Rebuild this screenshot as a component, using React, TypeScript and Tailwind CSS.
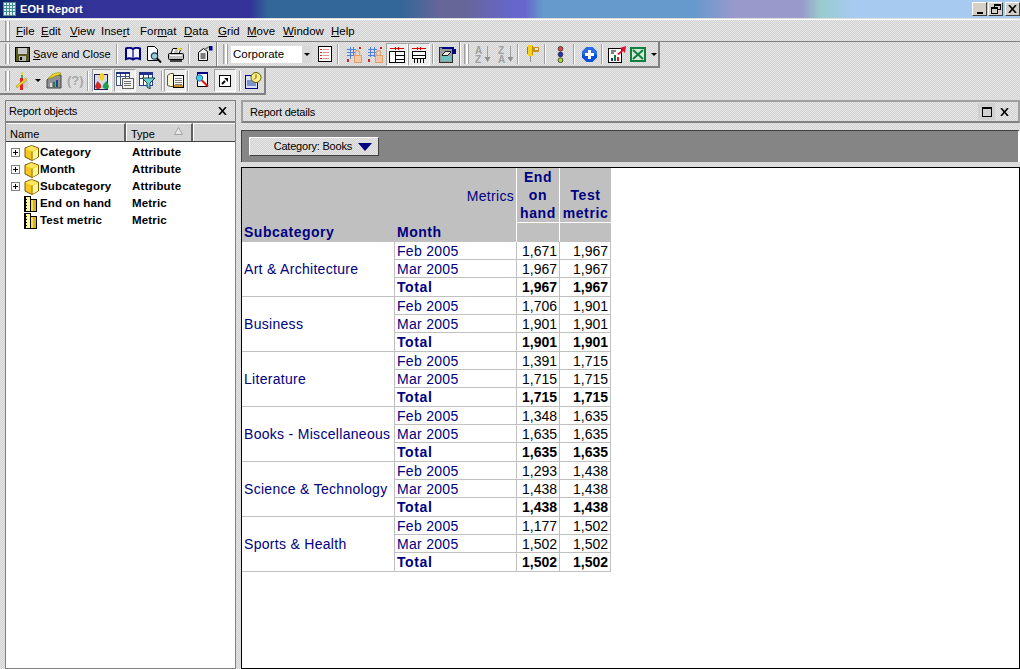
import React from 'react';

const dither =
	'bg-[repeating-conic-gradient(#d2d2d2_0_25%,#e6e6e6_0_50%)] bg-[length:2px_2px]';

type SvgProps = { className?: string };

const Px = ({ children, w = 16, h = 16, className = '' }: { children: React.ReactNode; w?: number; h?: number; className?: string }) => (
	<svg width={w} height={h} viewBox={`0 0 ${w} ${h}`} shapeRendering="crispEdges" className={`shrink-0 ${className}`}>
		{children}
	</svg>
);

const GridLogo = () => (
	<Px w={13} h={14}>
		<rect x="0.5" y="0.5" width="12" height="13" fill="#dfeef0" stroke="#6f7f90" />
		<path d="M0 3.5h13M0 6.5h13M0 9.5h13M3.5 0v14M6.5 0v14M9.5 0v14" stroke="#3f8f95" fill="none" />
	</Px>
);

const SaveIcon = ({ className }: SvgProps) => (
	<Px w={15} h={15} className={className}>
		<rect x="0.5" y="0.5" width="14" height="14" fill="#5a5a1e" stroke="#000" />
		<rect x="3" y="1" width="9" height="6" fill="#c8c8c8" />
		<rect x="4" y="9" width="7" height="5" fill="#b8b8b8" />
		<rect x="5" y="10" width="2" height="3" fill="#000" />
	</Px>
);

const BookIcon = ({ className }: SvgProps) => (
	<svg width="16" height="14" viewBox="0 0 16 14" className={`shrink-0 ${className ?? ''}`}>
		<path d="M1 1.5c2.500-1 5-1 7 .5 2-1.500 4.500-1.500 7-.5v10.500c-2.500-1-5-1-7 .5-2-1.500-4.500-1.500-7-.5z" fill="#f0f0fa" stroke="#000080" strokeWidth="2" />
		<path d="M8 2v11" stroke="#000080" strokeWidth="1.2" />
	</svg>
);

const PreviewIcon = ({ className }: SvgProps) => (
	<svg width="16" height="17" viewBox="0 0 16 17" className={`shrink-0 ${className ?? ''}`}>
		<path d="M1.5 .5h7l3 3v11h-10z" fill="#fff" stroke="#000" />
		<circle cx="8.5" cy="10" r="3.2" fill="#9ccbd0" stroke="#1c3a5a" strokeWidth="1.2" />
		<path d="M11 12.5l4 4" stroke="#000" strokeWidth="2" />
	</svg>
);

const PrintIcon = ({ className }: SvgProps) => (
	<svg width="16" height="15" viewBox="0 0 16 15" className={`shrink-0 ${className ?? ''}`}>
		<path d="M5 1.500h8l-2 5H3z" fill="#fff" stroke="#000" />
		<path d="M7 3h3M6 5h4" stroke="#808080" />
		<rect x="0.500" y="6.500" width="15" height="6" rx="1" fill="#c0c0c0" stroke="#000" />
		<rect x="2" y="8" width="12" height="1" fill="#ffffff" />
		<rect x="9" y="1" width="4" height="2" fill="#e8d840" />
		<rect x="2" y="13" width="12" height="2" fill="#404040" />
	</svg>
);

const PropsIcon = ({ className }: SvgProps) => (
	<svg width="17" height="16" viewBox="0 0 17 16" className={`shrink-0 ${className ?? ''}`}>
		<path d="M2.5 6.5L7.5 2.5l4 3v9h-9z" fill="#f2f2f2" stroke="#000" />
		<path d="M4.5 8h5M4.5 10h5M4.5 12h5" stroke="#000" />
		<path d="M9 3l4-2" stroke="#808080" strokeWidth="1.5" />
		<rect x="13" y="0" width="3.5" height="4.5" fill="#000080" />
	</svg>
);

const ListIcon = ({ className }: SvgProps) => (
	<Px w={14} h={16} className={className}>
		<rect x="0.5" y="0.5" width="13" height="15" fill="#fff" stroke="#000" />
		<path d="M5 3.5h6M5 6.5h6M5 9.5h6M5 12.5h6" stroke="#e89090" />
		<path d="M2 3.5h2M2 6.5h2M2 9.5h2M2 12.5h2" stroke="#e02020" />
	</Px>
);

const LockIcon = ({ flip, className }: SvgProps & { flip?: boolean }) => (
	<Px w={16} h={17} className={className}>
		<path d="M1 3.500h9M1 6.500h9M1 9.500h7" stroke="#5080d8" />
		<path d={flip ? 'M3.500 1v10M7.500 1v10' : 'M4.500 1v12M7.500 1v8'} stroke="#5080d8" />
		<rect x="1" y="13" width="2" height="3" fill="#d02020" />
		<rect x="8" y="9" width="7" height="7" fill="#f4c8a0" stroke="#e0a070" />
		<path d="M9.500 9V6.500a2 2 0 0 1 4 0V9" fill="none" stroke="#e0a878" strokeWidth="1.4" shapeRendering="auto" />
		<rect x="13" y="1" width="2" height="2" fill="#d02020" />
	</Px>
);

const LayoutA = () => (
	<Px w={16} h={17}>
		<path d="M1 2.5h6M9 2.5h6" stroke="#e00000" />
		<path d="M6 1l2 1.5-2 1.5zM10 1l-2 1.5 2 1.5z" fill="#e00000" />
		<rect x="0.5" y="5.5" width="15" height="11" fill="#fff" stroke="#000" />
		<path d="M6.5 5v12M6.5 9h9M6.5 13h9" stroke="#000" />
	</Px>
);

const LayoutB = () => (
	<Px w={16} h={17}>
		<path d="M1 2.5h6M9 2.5h6" stroke="#e00000" />
		<path d="M6 1l2 1.5-2 1.5zM10 1l-2 1.5 2 1.5z" fill="#e00000" />
		<rect x="1.5" y="5.5" width="13" height="7" fill="#fff" stroke="#000" />
		<path d="M2 9h12M3.5 12v5M6.5 12v5M9.5 12v5M12.5 12v5" stroke="#000" />
	</Px>
);

const HandIcon = ({ className }: SvgProps) => (
	<Px w={17} h={17} className={className}>
		<rect x="0.5" y="1.5" width="13" height="15" fill="#9a9a9a" stroke="#303030" />
		<rect x="2" y="10" width="10" height="5" fill="#70c0c0" />
		<path d="M3 1h12v2H3z" fill="#000080" />
		<rect x="13" y="3" width="4" height="5" fill="#000080" />
		<path d="M3 9l4-4 5 1-3 3-2 1z" fill="#e8e8e8" stroke="#202020" />
	</Px>
);

const SortIcon = ({ top, bottom, className }: SvgProps & { top: string; bottom: string }) => (
	<svg width="17" height="18" viewBox="0 0 17 18" className={`shrink-0 ${className ?? ''}`}>
		<text x="1" y="8.500" fontFamily="Liberation Sans" fontWeight="700" fontSize="10" fill="#a0a0a0">{top}</text>
		<text x="1" y="17.500" fontFamily="Liberation Sans" fontWeight="700" fontSize="10" fill="#a0a0a0">{bottom}</text>
		<path d="M13.500 1v11" stroke="#a0a0a0" />
		<path d="M10.500 12h6l-3 5z" fill="#909090" />
	</svg>
);

const PinIcon = ({ className }: SvgProps) => (
	<Px w={13} h={18} className={className}>
		<rect x="2" y="0" width="5" height="11" fill="#f8d020" />
		<rect x="1" y="2" width="1" height="7" fill="#a08000" />
		<rect x="6" y="1" width="1" height="9" fill="#b89000" />
		<rect x="7" y="2" width="6" height="5" fill="#c89020" />
		<rect x="9" y="3" width="3" height="2" fill="#e8e8e8" />
		<rect x="4" y="11" width="1" height="6" fill="#909090" />
	</Px>
);

const LightsIcon = ({ className }: SvgProps) => (
	<svg width="7" height="17" viewBox="0 0 7 17" className={`shrink-0 ${className ?? ''}`}>
		<circle cx="3.5" cy="2.8" r="2.4" fill="#e04048" stroke="#303030" strokeWidth=".8" />
		<circle cx="3.5" cy="8.5" r="2.4" fill="#2030c0" stroke="#303030" strokeWidth=".8" />
		<circle cx="3.5" cy="14.2" r="2.4" fill="#a8e030" stroke="#303030" strokeWidth=".8" />
	</svg>
);

const PlusCircle = ({ className }: SvgProps) => (
	<svg width="15" height="15" viewBox="0 0 15 15" className={`shrink-0 ${className ?? ''}`}>
		<path d="M4.5 0h6L15 4.5v6L10.5 15h-6L0 10.5v-6z" fill="#0a50d8" />
		<path d="M4.5 0h6L15 4.5v3H0v-3z" fill="#3a80f0" opacity=".6" />
		<path d="M6 3h3v3h3v3H9v3H6V9H3V6h3z" fill="#fff" />
	</svg>
);

const ChartArrow = ({ className }: SvgProps) => (
	<svg width="18" height="17" viewBox="0 0 18 17" className={`shrink-0 ${className ?? ''}`}>
		<rect x="0.5" y="2.5" width="13" height="14" fill="#fff" stroke="#000" />
		<path d="M3 5h5M3 7h3" stroke="#000" />
		<rect x="3" y="12" width="2" height="3" fill="#1030c0" />
		<rect x="6" y="9" width="2" height="6" fill="#108030" />
		<rect x="9" y="11" width="2" height="4" fill="#d02020" />
		<path d="M9 8l5-4-2-2 6-2-1 7-2-2-4 4z" fill="#e01030" />
	</svg>
);

const ExcelIcon = ({ className }: SvgProps) => (
	<Px w={16} h={15} className={className}>
		<rect x="0" y="0" width="16" height="15" fill="#108040" />
		<rect x="2" y="2" width="12" height="11" fill="#d8e8d8" />
		<path d="M3 3l10 9M13 3L3 12" stroke="#108040" strokeWidth="2" shapeRendering="auto" />
	</Px>
);

const PencilIcon = ({ className }: SvgProps) => (
	<svg width="15" height="20" viewBox="0 0 15 20" className={`shrink-0 ${className ?? ''}`}>
		<path d="M8 10h5v7H6z" fill="#c8c8c8" opacity=".7" />
		<path d="M7 1v4" stroke="#e8d020" strokeWidth="1.5" />
		<path d="M7 4v5" stroke="#20a020" strokeWidth="1.5" />
		<path d="M5 7h3v12H5z" fill="#e02020" />
		<path d="M1 15l10-8 1 2-10 8z" fill="#f0d040" stroke="#909000" strokeWidth=".5" />
	</svg>
);

const WizardIcon = ({ className }: SvgProps) => (
	<svg width="16" height="17" viewBox="0 0 16 17" className={`shrink-0 ${className ?? ''}`}>
		<path d="M1 16V8l5-5h9v13z" fill="#909090" stroke="#404040" />
		<path d="M2 7c3-5 8-7 13-6-2 3-4 2-6 3-2 1-4 2-7 3z" fill="#f0e020" stroke="#908000" strokeWidth=".6" />
		<rect x="7" y="10" width="2" height="5" fill="#208040" />
		<rect x="10" y="8" width="2" height="7" fill="#2040a0" />
		<rect x="4" y="11" width="2" height="4" fill="#d8d8d8" />
	</svg>
);

const ObjectsIcon = () => (
	<svg width="16" height="18" viewBox="0 0 16 18" className="shrink-0">
		<rect x="0.5" y="2.5" width="13" height="15" fill="#d8d8e8" stroke="#202050" />
		<path d="M8 9c3-1 3-8 0-8s-4 7 0 8z" fill="#f8d020" />
		<path d="M4.500 17c-3 0-4-2-3-4l2-4 3 3 1 3c-1 1-2 2-3 2z" fill="#d02828" />
		<path d="M11.500 17c3 0 4-2 3-4l-2-4-3 3-1 3c1 1 2 2 3 2z" fill="#18a050" />
	</svg>
);

const GridsIcon = () => (
	<Px w={18} h={17}>
		<rect x="0.5" y="0.5" width="13" height="13" fill="#fff" stroke="#405080" />
		<path d="M0 4.5h14M4.5 0v14M9.5 0v14" stroke="#405080" />
		<rect x="0" y="0" width="14" height="2" fill="#203080" />
		<rect x="6.5" y="6.5" width="11" height="10" fill="#f4f4f4" stroke="#606060" />
		<path d="M8 9h7M8 11h7M8 13h7" stroke="#707070" />
	</Px>
);

const FilterIcon = ({ className }: SvgProps) => (
	<Px w={17} h={17} className={className}>
		<rect x="0.5" y="0.5" width="13" height="13" fill="#fff" stroke="#2040a0" />
		<rect x="0" y="0" width="14" height="3" fill="#203090" />
		<path d="M0 6.5h14M4.5 3v10M9.5 3v10" stroke="#2040a0" />
		<path d="M3 6h13l-5 5v6l-3-2v-4z" fill="#70d0d0" stroke="#204040" shapeRendering="auto" />
	</Px>
);

const PagesIcon = () => (
	<Px w={17} h={15}>
		<path d="M.5 2.5l3-2h3v13h-3l-3-1z" fill="#fff8d0" stroke="#605030" shapeRendering="auto" />
		<rect x="6.5" y="2.5" width="10" height="12" fill="#fff" stroke="#000" />
		<path d="M8 5h7M8 7h7M8 9h7M8 11h7" stroke="#808080" />
		<rect x="7" y="12" width="9" height="2" fill="#c89020" />
	</Px>
);

const SearchPageIcon = ({ className }: SvgProps) => (
	<svg width="16" height="17" viewBox="0 0 16 17" className={`shrink-0 ${className ?? ''}`}>
		<rect x="2.5" y="0.5" width="10" height="14" fill="#fff" stroke="#000" />
		<rect x="2" y="0" width="11" height="2" fill="#000080" />
		<circle cx="4.5" cy="6" r="3.2" fill="#40d0e0" stroke="#3060a0" />
		<path d="M7 8.5l6 6" stroke="#e01010" strokeWidth="2" />
	</svg>
);

const ShortcutIcon = () => (
	<Px w={12} h={12}>
		<rect x="0.5" y="0.5" width="11" height="11" fill="#fff" stroke="#000" />
		<path d="M3 9l3-3" stroke="#000" strokeWidth="2" shapeRendering="auto" />
		<path d="M5 3h4v4z" fill="#000" shapeRendering="auto" />
	</Px>
);

const ClockIcon = ({ className }: SvgProps) => (
	<svg width="17" height="17" viewBox="0 0 17 17" className={`shrink-0 ${className ?? ''}`}>
		<rect x="0.5" y="3.5" width="12" height="13" fill="#d8e0f8" stroke="#000080" />
		<path d="M2 9h9M2 11h9M2 13h9" stroke="#2040a0" />
		<circle cx="11" cy="5.5" r="5" fill="#f8f080" stroke="#606000" />
		<path d="M11 2.5v3l-2 2" stroke="#804000" fill="none" />
	</svg>
);

const Cube = () => (
	<svg width="16" height="16" viewBox="0 0 16 16" className="shrink-0">
		<path d="M7.500.500l7 2.500v9l-6.500 3.500-7-3.500V3z" fill="#f4c820" stroke="#7a5a00" strokeLinejoin="round" />
		<path d="M1.500 3.500l6.500 3 6-3-6.500-2.500z" fill="#ffe860" />
		<path d="M8.500 7l5.500-3v8l-5.500 3z" fill="#fff59a" />
		<path d="M8 6.500v8.500" stroke="#9a7400" />
	</svg>
);

const MetricIcon = () => (
	<Px w={13} h={16}>
		<rect x="0" y="0" width="7" height="16" fill="#000" />
		<rect x="2" y="1" width="4" height="14" fill="#fff8a0" />
		<path d="M0 3.500h3M0 6.500h3M0 9.500h3M0 12.500h3" stroke="#000" />
		<rect x="7" y="3" width="6" height="13" fill="#000" />
		<rect x="7" y="4" width="2" height="11" fill="#f8e050" />
		<rect x="9" y="4" width="3" height="11" fill="#d8b030" />
	</Px>
);

const Grip = ({ className = '' }: SvgProps) => (
	<div className={`flex h-[20px] w-[5px] shrink-0 gap-px border-x border-[#a0a0a0] bg-white ${className}`}>
		<div className="w-px bg-[#c8c8c8]" />
	</div>
);

const Sep = ({ className = '' }: SvgProps) => (
	<div className={`h-[20px] w-[2px] shrink-0 border-r border-white bg-[#a0a0a0] ${className}`} />
);

const Edge = ({ className = '' }: SvgProps) => (
	<div className={`h-full w-[2px] shrink-0 border-r border-white bg-[#808080] ${className}`} />
);

const Pressed = ({ children, className = '', w }: { children: React.ReactNode; className?: string; w: string }) => (
	<div className={`flex h-[23px] shrink-0 items-center justify-center border border-t-[#a0a0a0] border-l-[#a0a0a0] border-r-white border-b-white bg-[#eeeeee] ${w} ${className}`}>
		{children}
	</div>
);

const Arrow = ({ className = '' }: SvgProps) => (
	<div className={`h-0 w-0 shrink-0 border-x-[3px] border-t-[3px] border-x-transparent border-t-black ${className}`} />
);

const WinButton = ({ children, className = '' }: { children: React.ReactNode; className?: string }) => (
	<div className={`flex h-[14px] w-[15px] items-center justify-center border border-t-white border-l-white border-r-[#404040] border-b-[#404040] bg-[#d4d0c8] ${className}`}>
		{children}
	</div>
);

const Close = ({ className = '' }: SvgProps) => (
	<svg width="9" height="8" viewBox="0 0 9 8" className={className}>
		<path d="M1 0l7 8M8 0L1 8" stroke="#000" strokeWidth="1.6" />
	</svg>
);

const menu = [
	{ pre: '', u: 'F', post: 'ile', w: 'w-[25px]' },
	{ pre: '', u: 'E', post: 'dit', w: 'w-[29px]' },
	{ pre: '', u: 'V', post: 'iew', w: 'w-[31px]' },
	{ pre: 'Inse', u: 'r', post: 't', w: 'w-[39px]' },
	{ pre: 'For', u: 'm', post: 'at', w: 'w-[44px]' },
	{ pre: '', u: 'D', post: 'ata', w: 'w-[34px]' },
	{ pre: '', u: 'G', post: 'rid', w: 'w-[29px]' },
	{ pre: '', u: 'M', post: 'ove', w: 'w-[36px]' },
	{ pre: '', u: 'W', post: 'indow', w: 'w-[48px]' },
	{ pre: '', u: 'H', post: 'elp', w: 'w-[30px]' },
];

const objects = [
	{ name: 'Category', type: 'Attribute', expand: true },
	{ name: 'Month', type: 'Attribute', expand: true },
	{ name: 'Subcategory', type: 'Attribute', expand: true },
	{ name: 'End on hand', type: 'Metric', expand: false },
	{ name: 'Test metric', type: 'Metric', expand: false },
];

const groups = [
	{ name: 'Art & Architecture', rows: ['1,671', '1,967', '1,967'], test: '1,967' },
	{ name: 'Business', rows: ['1,706', '1,901', '1,901'], test: '1,901' },
	{ name: 'Literature', rows: ['1,391', '1,715', '1,715'], test: '1,715' },
	{ name: 'Books - Miscellaneous', rows: ['1,348', '1,635', '1,635'], test: '1,635' },
	{ name: 'Science & Technology', rows: ['1,293', '1,438', '1,438'], test: '1,438' },
	{ name: 'Sports & Health', rows: ['1,177', '1,502', '1,502'], test: '1,502' },
];

const cell = 'border-r border-b border-[#c0c0c0] p-0 align-middle';

export default function App() {
	return (
		<div className={`flex h-[669px] w-[1020px] flex-col overflow-hidden font-['Liberation_Sans',sans-serif] text-[11px] text-black ${dither}`}>
			{/* title bar */}
			<div className="flex h-[18px] shrink-0 items-center bg-[linear-gradient(90deg,#0a246a_0,#333399_90px,#333399_250px,#336699_268px,#336699_400px,#666699_440px,#666699_463px,#6666cc_513px,#6666cc_525px,#6699cc_543px,#6699cc_693px,#9999cc_735px,#9999cc_802px,#99cccc_820px,#a6caf0_853px)] pl-[3px]">
				<GridLogo />
				<span className="ml-[4px] text-[11px] font-bold tracking-[0.05px] text-white">EOH Report</span>
				<div className="ml-auto flex items-center">
					<WinButton>
						<div className="mt-[7px] h-[2px] w-[6px] bg-black" />
					</WinButton>
					<WinButton className="ml-px">
						<svg width="10" height="10" viewBox="0 0 10 10" shapeRendering="crispEdges">
							<path d="M3 .5h6v5H7M3 .5v2M3 1.5h6" fill="none" stroke="#000" />
							<rect x="0.5" y="3.5" width="6" height="6" fill="none" stroke="#000" />
							<path d="M1 4.5h5" stroke="#000" />
						</svg>
					</WinButton>
					<WinButton className="ml-[2px]">
						<Close />
					</WinButton>
				</div>
			</div>

			{/* menu bar */}
			<div className="mt-px flex h-[23px] shrink-0 items-center border-t border-b border-t-white border-b-[#808080]">
				<Grip className="ml-[5px]" />
				<div className="mt-[2px] ml-[6px] flex">
					{menu.map((m) => (
						<span key={m.u + m.post} className={`${m.w} text-[11.5px]`}>
							{m.pre}
							<span className="underline">{m.u}</span>
							{m.post}
						</span>
					))}
				</div>
			</div>

			{/* standard toolbars */}
			<div className="flex h-[26px] w-[660px] shrink-0 items-center border-r-2 border-b-2 border-[#808080]">
				<Grip className="ml-[5px]" />
				<SaveIcon className="ml-[5px]" />
				<span className="ml-[3px] w-[74px] shrink-0 whitespace-nowrap pt-px text-[11px]">
					<span className="underline">S</span>ave and Close
				</span>
				<Sep className="ml-[9px]" />
				<BookIcon className="ml-[7px]" />
				<PreviewIcon className="ml-[5px]" />
				<PrintIcon className="ml-[6px]" />
				<Sep className="ml-[4px]" />
				<PropsIcon className="ml-[6px]" />
				<Edge className="ml-[3px]" />
				<Grip className="ml-[5px]" />
				<div className="ml-[3px] flex h-[17px] w-[81px] shrink-0 items-center justify-between bg-white pl-[2px]">
					<span className="pt-px text-[11.5px]">Corporate</span>
					<div className="flex h-full w-[10px] items-center justify-center bg-[#d8d8d8]">
						<Arrow />
					</div>
				</div>
				<ListIcon className="ml-[6px]" />
				<Sep className="ml-[5px]" />
				<LockIcon className="ml-[7px]" />
				<LockIcon flip className="ml-[5px]" />
				<Pressed w="w-[22px]" className="ml-[3px]">
					<LayoutA />
				</Pressed>
				<Pressed w="w-[22px]">
					<LayoutB />
				</Pressed>
				<Sep className="ml-[2px]" />
				<HandIcon className="ml-[5px]" />
				<Edge className="ml-[3px]" />
				<Grip className="ml-[3px]" />
				<SortIcon top="A" bottom="Z" className="ml-[5px]" />
				<SortIcon top="Z" bottom="A" className="ml-[6px]" />
				<Sep className="ml-[3px]" />
				<PinIcon className="ml-[7px]" />
				<Sep className="ml-[5px]" />
				<LightsIcon className="ml-[11px]" />
				<Sep className="ml-[9px]" />
				<PlusCircle className="ml-[7px]" />
				<Sep className="ml-[4px]" />
				<ChartArrow className="ml-[5px]" />
				<ExcelIcon className="ml-[4px]" />
				<Arrow className="ml-[5px]" />
			</div>

			{/* analysis toolbar */}
			<div className="flex h-[27px] w-[266px] shrink-0 items-center border-r-2 border-b-2 border-[#808080]">
				<Grip className="ml-[5px]" />
				<PencilIcon className="ml-[5px]" />
				<Arrow className="ml-[5px]" />
				<WizardIcon className="ml-[5px]" />
				<span className="ml-[5px] w-[17px] shrink-0 whitespace-nowrap text-[13px] font-bold text-[#a8a8a8]">(?)</span>
				<Sep className="ml-[3px]" />
				<Pressed w="w-[20px]" className="ml-[3px]">
					<ObjectsIcon />
				</Pressed>
				<Pressed w="w-[22px]" className="ml-[2px]">
					<GridsIcon />
				</Pressed>
				<FilterIcon className="ml-[3px]" />
				<Sep className="ml-[5px]" />
				<Pressed w="w-[22px]" className="ml-px">
					<PagesIcon />
				</Pressed>
				<Sep className="ml-px" />
				<SearchPageIcon className="ml-[6px]" />
				<Pressed w="w-[22px]" className="ml-[3px]">
					<ShortcutIcon />
				</Pressed>
				<Sep className="ml-[3px]" />
				<ClockIcon className="ml-[4px]" />
			</div>

			{/* panels */}
			<div className="mt-[5px] flex min-h-0 flex-1">
				<div className="ml-[5px] flex w-[231px] shrink-0 flex-col border border-[#808080]">
					<div className="flex h-[22px] shrink-0 items-center justify-between border-b-2 border-[#808080] pr-[8px] pl-[3px]">
						<span className="text-[11px] tracking-[-0.2px]">Report objects</span>
						<Close />
					</div>
					<div className="flex h-[19px] shrink-0 border-b border-[#404040] bg-[#d4d4d4] text-[11px]">
						<div className="w-[120px] border-t border-r-2 border-t-white border-r-[#606060] pt-[2px] pl-[4px]">Name</div>
						<div className="flex w-[67px] border-t border-r-2 border-l border-t-white border-r-[#606060] border-l-white pt-[2px] pl-[4px]">
							Type
							<svg width="9" height="8" viewBox="0 0 9 8" className="mt-[1px] ml-[19px]">
								<path d="M4.5 .5l4 7H.5z" fill="#e8e8e8" stroke="#a0a0a0" />
							</svg>
						</div>
						<div className="flex-1 border-t border-l border-t-white border-l-white" />
					</div>
					<div className="flex-1 bg-white pt-[2px]">
						{objects.map((o) => (
							<div key={o.name} className="flex h-[17px] items-center text-[11.5px] font-bold tracking-[0.15px]">
								<div className="flex w-[14px] shrink-0 justify-end">
									{o.expand && (
										<svg width="9" height="9" viewBox="0 0 9 9" shapeRendering="crispEdges">
											<rect x="0.5" y="0.5" width="8" height="8" fill="#fff" stroke="#808080" />
											<path d="M2 4.5h5M4.5 2v5" stroke="#000" />
										</svg>
									)}
								</div>
								<div className="ml-[4px] flex w-[16px] shrink-0">
									{o.expand ? <Cube /> : <MetricIcon />}
								</div>
								<span className="w-[92px] shrink-0">{o.name}</span>
								<span>{o.type}</span>
							</div>
						))}
					</div>
				</div>

				<div className="ml-[5px] flex min-w-0 flex-1 flex-col">
					<div className="flex h-[23px] shrink-0 items-center border-2 border-[#a0a0a0] border-b-[#808080] pl-[7px]">
						<span className="pt-px text-[11px] tracking-[-0.2px]">Report details</span>
						<div className="ml-auto flex h-[17px] w-[17px] items-center justify-center bg-[#d0d0d0]">
							<div className="h-[10px] w-[10px] border border-t-2 border-black" />
						</div>
						<Close className="mr-[9px] ml-[5px]" />
					</div>
					<div className="mt-[7px] flex h-[32px] shrink-0 items-center border-t border-l border-t-[#404040] border-l-[#404040] border-r-2 border-r-white bg-[#858585] pl-[7px]">
						<div className={`flex h-[19px] w-[130px] items-center justify-end border border-t-white border-l-white border-r-[#404040] border-b-[#404040] pr-[6px] ${dither}`}>
							<span className="text-[11px] tracking-[-0.2px]">Category: Books</span>
							<div className="ml-[6px] h-0 w-0 border-x-[7px] border-t-[8px] border-x-transparent border-t-[#000080]" />
						</div>
					</div>
					<div className="mt-[5px] min-h-0 flex-1 border border-black bg-white">
						<table className="w-[369px] table-fixed border-separate border-spacing-0 font-['Liberation_Sans',sans-serif] text-[14px] leading-[17px] tracking-[0.3px] text-[#000080]">
							<colgroup>
								<col className="w-[153px]" />
								<col className="w-[122px]" />
								<col className="w-[43px]" />
								<col className="w-[51px]" />
							</colgroup>
							<thead className="bg-[#c0c0c0] leading-[18px]">
								<tr className="h-[55px]">
									<th colSpan={2} className="border-r border-white p-0 pr-[2px] text-right font-normal">Metrics</th>
									<th className="border-r border-b border-white p-0 text-center align-bottom font-bold tracking-[0.6px]">End<br />on<br />hand</th>
									<th className="border-b border-white p-0 text-center align-bottom font-bold tracking-[0.6px]">Test<br />metric</th>
								</tr>
								<tr className="h-[19px]">
									<th className="p-0 pl-[2px] text-left align-top font-bold tracking-[0.5px]">Subcategory</th>
									<th className="border-r border-white p-0 pl-[2px] text-left align-top font-bold tracking-[0.5px]">Month</th>
									<th className="border-r border-white p-0" />
									<th className="p-0" />
								</tr>
							</thead>
							<tbody>
								{groups.map((g) =>
									['Feb 2005', 'Mar 2005', 'Total'].map((label, i) => (
										<tr key={g.name + label} className={i === 2 ? 'h-[19px]' : 'h-[18px]'}>
											{i === 0 && (
												<td rowSpan={3} className={`${cell} whitespace-nowrap pl-[2px]`}>{g.name}</td>
											)}
											<td className={`${cell} pl-[2px] ${i === 2 ? 'font-bold tracking-[0.6px]' : 'pt-px leading-[16px]'}`}>{label}</td>
											<td className={`${cell} pr-[2px] text-right tracking-normal text-black ${i === 2 ? 'font-bold' : 'pt-px leading-[16px]'}`}>{g.rows[i]}</td>
											<td className={`${cell} pr-[2px] text-right tracking-normal text-black ${i === 2 ? 'font-bold' : 'pt-px leading-[16px]'}`}>{g.test}</td>
										</tr>
									)),
								)}
							</tbody>
						</table>
					</div>
				</div>
			</div>
		</div>
	);
}
